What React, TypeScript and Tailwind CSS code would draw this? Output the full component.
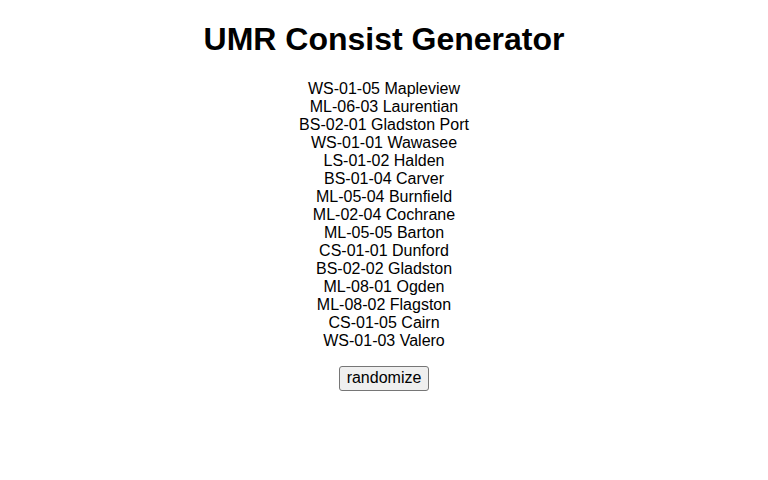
const cars = [
  "WS-01-05 Mapleview",
  "ML-06-03 Laurentian",
  "BS-02-01 Gladston Port",
  "WS-01-01 Wawasee",
  "LS-01-02 Halden",
  "BS-01-04 Carver",
  "ML-05-04 Burnfield",
  "ML-02-04 Cochrane",
  "ML-05-05 Barton",
  "CS-01-01 Dunford",
  "BS-02-02 Gladston",
  "ML-08-01 Ogden",
  "ML-08-02 Flagston",
  "CS-01-05 Cairn",
  "WS-01-03 Valero",
];

export default function App() {
  return (
    <div className="min-h-[480px] bg-white text-black text-center font-['Liberation_Sans',Arial,sans-serif]">
      <h1 className="text-[32px] leading-[37px] font-bold pt-[21px] pb-[22px]">UMR Consist Generator</h1>
      <div className="text-[16px] leading-[18px]">
        {cars.map((c) => (
          <div key={c}>{c}</div>
        ))}
      </div>
      <div className="mt-4">
        <button className="text-[16px] leading-[18px] px-[7px] pt-[2px] pb-[3px] bg-[#efefef] border border-[#767676] rounded-[3px] text-black">
          randomize
        </button>
      </div>
    </div>
  );
}
